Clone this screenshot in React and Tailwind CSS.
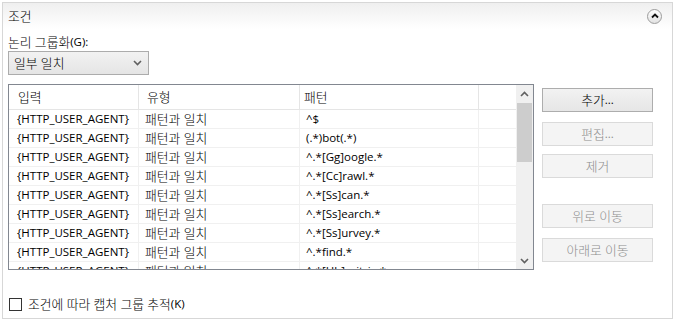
import React from "react";

const rows = [
  "^$",
  "(.*)bot(.*)",
  "^.*[Gg]oogle.*",
  "^.*[Cc]rawl.*",
  "^.*[Ss]can.*",
  "^.*[Ss]earch.*",
  "^.*[Ss]urvey.*",
  "^.*find.*",
  "^.*[Hh]eritrix.*",
];

const font = {
  fontFamily: '"Open Sans", "Noto Sans CJK KR", sans-serif',
};

// hangul is set a touch larger than the latin text, as Malgun Gothic is
const K = ({ children }) => <span className="text-[12.8px] font-light leading-none">{children}</span>;

const Caret = ({ up = false, className = "" }) => (
  <svg width="9" height="6" viewBox="0 0 9 6" className={className}>
    <path
      d={up ? "M1 5 L4.5 1.5 L8 5" : "M1 1 L4.5 4.5 L8 1"}
      fill="none"
      stroke="#606060"
      strokeWidth="1.6"
    />
  </svg>
);

const SideButton = ({ children, enabled = false, className = "" }) => (
  <button
    className={`flex h-[24px] w-[111px] items-center justify-center border leading-none ${
      enabled
        ? "border-[#adadad] bg-gradient-to-b from-[#f2f2f2] to-[#e6e6e6] text-black"
        : "border-[#dadada] bg-[#f4f4f4] text-[#8d8d8d]"
    } ${className}`}
  >
    {children}
  </button>
);

const App = () => {
  return (
    <div className="h-[323px] w-[675px] bg-white pl-[2px] pt-[2px]" style={font}>
      <div className="flex h-[317px] w-[671px] flex-col border border-[#d7d7d7] text-[11.5px] text-black">
        <div className="flex h-[26px] shrink-0 items-center justify-between bg-gradient-to-b from-[#efefef] to-white pl-[5px] pr-[10px]">
          <span className="leading-none"><K>조건</K></span>
          <div className="grid h-[15px] w-[15px] place-content-center rounded-full border border-[#9c9c9c] bg-gradient-to-b from-white to-[#e2e2e2]">
            <svg width="8" height="6" viewBox="0 0 8 6">
              <path d="M1 4.5 L4 1.5 L7 4.5" fill="none" stroke="#111" strokeWidth="1.8" />
            </svg>
          </div>
        </div>

        <div className="mt-[5px] flex h-[16px] shrink-0 items-center pl-[5px] leading-none">
          <K>논리 그룹화</K>(G):
        </div>
        <div className="ml-[5px] mt-[1px] flex h-[24px] w-[141px] shrink-0 items-center justify-between border border-[#acacac] bg-gradient-to-b from-[#f2f2f2] to-[#e5e5e5] pl-[5px] pr-[6px]">
          <K>일부 일치</K>
          <Caret />
        </div>

        <div className="ml-[5px] mt-[9px] flex shrink-0 gap-[8px]">
          <div className="flex h-[186px] w-[526px] overflow-hidden border border-[#828790] bg-white">
            <div className="flex-1 overflow-hidden">
              <div className="flex h-[25px] border-b border-[#e5e5e5] leading-none">
                <div className="flex w-[130px] items-center border-r border-[#e5e5e5] pl-[9px]"><K>입력</K></div>
                <div className="flex w-[161px] items-center border-r border-[#e5e5e5] pl-[8px]"><K>유형</K></div>
                <div className="flex w-[179px] items-center border-r border-[#e5e5e5] pl-[4px]"><K>패턴</K></div>
                <div className="flex-1" />
              </div>
              {rows.map((p, i) => (
                <div key={i} className="flex h-[19px] border-b border-[#f0f0f0] leading-none">
                  <div className="flex w-[130px] items-center border-r border-[#f0f0f0] pl-[8px]">
                    {"{HTTP_USER_AGENT}"}
                  </div>
                  <div className="flex w-[161px] items-center border-r border-[#f0f0f0] pl-[6px]">
                    <K>패턴과 일치</K>
                  </div>
                  <div className="flex w-[179px] items-center border-r border-[#f0f0f0] pl-[6px]">{p}</div>
                  <div className="flex-1" />
                </div>
              ))}
            </div>
            <div className="flex w-[17px] flex-col bg-[#f0f0f0]">
              <div className="flex h-[18px] items-center justify-center">
                <Caret up />
              </div>
              <div className="mx-[1px] h-[59px] bg-[#cdcdcd]" />
              <div className="flex-1" />
              <div className="flex h-[17px] items-center justify-center">
                <Caret />
              </div>
            </div>
          </div>

          <div className="flex flex-col pt-[4px]">
            <SideButton enabled><K>추가</K>...</SideButton>
            <SideButton className="mt-[10px]"><K>편집</K>...</SideButton>
            <SideButton className="mt-[8px]"><K>제거</K></SideButton>
            <SideButton className="mt-[26px]"><K>위로 이동</K></SideButton>
            <SideButton className="mt-[10px]"><K>아래로 이동</K></SideButton>
          </div>
        </div>

        <label className="ml-[6px] mt-[27px] flex h-[14px] items-center gap-[6px] leading-none">
          <span className="h-[13px] w-[13px] border border-[#333] bg-white" />
          <span className="flex items-center">
            <K>조건에 따라 캡처 그룹 추적</K>(K)
          </span>
        </label>
      </div>
    </div>
  );
};

export default App;
